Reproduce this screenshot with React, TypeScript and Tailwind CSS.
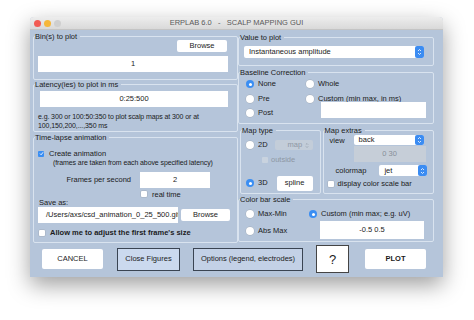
import React from "react";

const ink = "text-[#1b1b1b]";

function Panel({
  title,
  className,
  children,
}: {
  title: string;
  className?: string;
  children?: React.ReactNode;
}) {
  return (
    <fieldset className={`border border-[#d9e3ef] rounded-[2px] ${className ?? ""}`}>
      <legend className="px-0 ml-[1px] text-[7.5px] leading-[9px] pr-[3px]">{title}</legend>
      {children}
    </fieldset>
  );
}

function Radio({ on, label, dim }: { on?: boolean; label: string; dim?: boolean }) {
  return (
    <div className="flex items-center h-[8px]">
      <span
        className={`w-[8px] h-[8px] rounded-full flex items-center justify-center shrink-0 ${
          on ? "bg-[#3a8ef3]" : "bg-white shadow-[0_0_0_0.5px_#a3aebb]"
        }`}
      >
        {on && <span className="w-[3px] h-[3px] rounded-full bg-white" />}
      </span>
      <span className={`ml-[4px] text-[7.5px] leading-none ${dim ? "text-[#8b96a3]" : ""}`}>{label}</span>
    </div>
  );
}

function Check({ on, dim }: { on?: boolean; dim?: boolean }) {
  return (
    <span
      className={`w-[6px] h-[6px] rounded-[1px] flex items-center justify-center shrink-0 ${
        on ? "bg-[#3a8ef3]" : dim ? "bg-[#c9d3df]" : "bg-white shadow-[0_0_0_0.5px_#a3aebb]"
      }`}
    >
      {on && (
        <svg width="5" height="5" viewBox="0 0 10 10">
          <path d="M2 5.2 L4.2 7.5 L8.2 2.5" stroke="white" strokeWidth="1.8" fill="none" />
        </svg>
      )}
    </span>
  );
}

function Stepper() {
  return (
    <span className="w-[9px] h-full rounded-[2px] bg-[#3b8cf2] flex items-center justify-center shrink-0">
      <svg width="5" height="8" viewBox="0 0 10 16">
        <path d="M2 6 L5 3 L8 6 M2 10 L5 13 L8 10" stroke="white" strokeWidth="1.6" fill="none" />
      </svg>
    </span>
  );
}

function Select({ value, className }: { value: string; className: string }) {
  return (
    <div className={`bg-white flex items-center rounded-[2px] ${className}`}>
      <span className="flex-1 pl-[5px] text-[7.5px] leading-none">{value}</span>
      <Stepper />
    </div>
  );
}

export default function App() {
  return (
    <div className={`w-[474px] h-[320px] bg-white pl-[30px] pt-[17px] font-['Liberation_Sans',Arial,sans-serif] ${ink}`}>
      <div className="w-[413px] h-[260px] bg-[#b5c5da] rounded-t-[4px] shadow-[0_8px_22px_rgba(0,0,0,0.38)] flex flex-col overflow-hidden">
        {/* title bar */}
        <div className="h-[13px] bg-gradient-to-b from-[#ededed] to-[#d9d9d9] border-b border-[#c4c4c4] grid grid-cols-[1fr_auto_1fr] items-center">
          <div className="flex items-center gap-[3px] pl-[4px]">
            <span className="w-[7px] h-[7px] rounded-full bg-[#f25a52]" />
            <span className="w-[7px] h-[7px] rounded-full bg-[#f6b73a]" />
            <span className="w-[7px] h-[7px] rounded-full bg-[#cfcfcf]" />
          </div>
          <div className="text-[7.5px] leading-none text-[#5a5a5a] whitespace-pre">ERPLAB 6.0   -   SCALP MAPPING GUI</div>
          <div />
        </div>

        {/* body */}
        <div className="flex-1 pl-[3px] pt-[2px] flex flex-col">
          <div className="flex h-[211px]">
            {/* left column */}
            <div className="w-[205px] flex flex-col">
              <Panel title="Bin(s) to plot" className="h-[48px]">
                <div className="flex justify-end pr-[10px] -mt-[1px]">
                  <div className="w-[50px] h-[12px] bg-white rounded-[2px] flex items-center justify-center text-[7.5px] leading-none">
                    Browse
                  </div>
                </div>
                <div className="ml-[4px] mt-[4px] w-[190px] h-[16px] bg-white flex items-center justify-center text-[7.5px] leading-none">
                  1
                </div>
              </Panel>

              <Panel title="Latency(ies) to plot in ms" className="h-[52px]">
                <div className="ml-[6px] mt-[2px] w-[188px] h-[16px] bg-white flex items-center justify-center text-[7.5px] leading-none">
                  0:25:500
                </div>
                <div className="ml-[4px] mt-[5px] text-[7px] leading-[9px] tracking-[-0.1px]">
                  e.g. 300 or 100:50:350 to plot scalp maps at 300 or at
                  <br />
                  100,150,200,...,350 ms
                </div>
              </Panel>

              <Panel title="Time-lapse animation" className="mt-[1px] h-[110px]">
                <div className="flex items-center ml-[4px] mt-[8px]">
                  <Check on />
                  <span className="ml-[5px] text-[7.5px] leading-none">Create animation</span>
                </div>
                <div className="ml-[19px] mt-[1px] text-[7px] leading-none whitespace-nowrap tracking-[-0.1px]">
                  (frames are taken from each above specified latency)
                </div>
                <div className="flex items-center mt-[6px]">
                  <span className="w-[97px] text-right text-[7.5px] leading-none">Frames per second</span>
                  <div className="ml-[9px] w-[70px] h-[16px] bg-white flex items-center justify-center text-[7.5px] leading-none">
                    2
                  </div>
                </div>
                <div className="flex items-center ml-[107px] mt-[3px]">
                  <Check />
                  <span className="ml-[5px] text-[7.5px] leading-none">real time</span>
                </div>
                <div className="ml-[5px] text-[7.5px] leading-[9px]">Save as:</div>
                <div className="flex items-center">
                  <div className="ml-[4px] w-[140px] h-[16px] bg-white flex items-center pl-[8px] text-[7.5px] leading-none whitespace-nowrap overflow-hidden">
                    /Users/axs/csd_animation_0_25_500.gif
                  </div>
                  <div className="ml-[3px] w-[49px] h-[12px] bg-white rounded-[2px] flex items-center justify-center text-[7.5px] leading-none">
                    Browse
                  </div>
                </div>
                <div className="flex items-center ml-[5px] mt-[6px]">
                  <Check />
                  <span className="ml-[5px] text-[7.5px] leading-none font-bold whitespace-nowrap">Allow me to adjust the first frame's size</span>
                </div>
              </Panel>
            </div>

            {/* right column */}
            <div className="w-[196px] flex flex-col">
              <Panel title="Value to plot" className="mt-[1px] h-[33px]">
                <Select value="Instantaneous amplitude" className="ml-[5px] mt-[4px] w-[180px] h-[12px]" />
              </Panel>

              <Panel title="Baseline Correction" className="mt-[2px] h-[56px]">
                <div className="flex mt-[3px] ml-[7px]">
                  <div className="w-[60px] flex flex-col gap-[6.5px]">
                    <Radio on label="None" />
                    <Radio label="Pre" />
                    <Radio label="Post" />
                  </div>
                  <div className="flex flex-col">
                    <Radio label="Whole" />
                    <div className="mt-[6.5px]">
                      <Radio label="Custom (min max, in ms)" />
                    </div>
                    <div className="ml-[15px] -mt-[1px] w-[105px] h-[16px] bg-white" />
                  </div>
                </div>
              </Panel>

              <div className="flex mt-[2px] h-[68px]">
                <Panel title="Map type" className="w-[81px] ml-[2px] h-full">
                  <div className="flex items-center ml-[5px] mt-[5px]">
                    <Radio label="2D" />
                    <div className="ml-[7px] w-[38px] h-[10px] bg-[#c3cdd9] rounded-[2px] flex items-center justify-between pl-[13px] pr-[4px] text-[7.5px] leading-none text-[#8d97a4]">
                      <span>map</span>
                      <svg width="4" height="7" viewBox="0 0 10 16">
                        <path d="M2 6 L5 3 L8 6 M2 10 L5 13 L8 10" stroke="#8d97a4" strokeWidth="1.6" fill="none" />
                      </svg>
                    </div>
                  </div>
                  <div className="flex items-center ml-[21px] mt-[6px]">
                    <Check dim />
                    <span className="ml-[3px] text-[7.5px] leading-none text-[#8d97a4]">outside</span>
                  </div>
                  <div className="flex items-center ml-[5px] mt-[12px]">
                    <Radio on label="3D" />
                    <div className="ml-[9px] w-[36px] h-[15px] bg-white rounded-[2px] flex items-center justify-center text-[7.5px] leading-none">
                      spline
                    </div>
                  </div>
                </Panel>

                <Panel title="Map extras" className="w-[112px] ml-[2px] h-full">
                  <div className="flex items-start">
                    <span className="ml-[6px] mt-[2px] text-[7.5px] leading-none">view</span>
                    <div className="ml-[9px] flex flex-col">
                      <Select value="back" className="w-[70px] h-[10px]" />
                      <div className="mt-[1px] w-[72px] h-[16px] bg-[#c6ced8] flex items-center justify-center text-[7.5px] leading-none text-[#868f99]">
                        0 30
                      </div>
                    </div>
                  </div>
                  <div className="flex items-center mt-[3px]">
                    <span className="ml-[12px] text-[7.5px] leading-none">colormap</span>
                    <Select value="jet" className="ml-[13px] w-[48px] h-[11px]" />
                  </div>
                  <div className="flex items-center ml-[4px] mt-[4px]">
                    <Check />
                    <span className="ml-[4px] text-[7.5px] leading-none">display color scale bar</span>
                  </div>
                </Panel>
              </div>

              <Panel title="Color bar scale" className="mt-[1px] h-[47px]">
                <div className="flex ml-[7px] mt-[6px]">
                  <div className="w-[63px] flex flex-col gap-[9px]">
                    <Radio label="Max-Min" />
                    <Radio label="Abs Max" />
                  </div>
                  <div className="flex flex-col">
                    <Radio on label="Custom (min max; e.g. uV)" />
                    <div className="ml-[11px] mt-[3px] w-[104px] h-[18px] bg-white flex items-center justify-center text-[7.5px] leading-none">
                      -0.5 0.5
                    </div>
                  </div>
                </div>
              </Panel>
            </div>
          </div>

          {/* buttons */}
          <div className="flex items-center h-[28px] mt-[2px]">
            <div className="ml-[9px] w-[61px] h-[20px] bg-white rounded-[2px] flex items-center justify-center text-[7.5px] leading-none">
              CANCEL
            </div>
            <div className="ml-[14px] w-[63px] h-[23px] bg-[#cbd9ee] border border-[#3a4452] border-r-[1.5px] border-b-[1.5px] flex items-center justify-center text-[7.5px] leading-none">
              Close Figures
            </div>
            <div className="ml-[13px] w-[110px] h-[23px] bg-[#c3d1e6] border border-[#3a4452] border-r-[1.5px] border-b-[1.5px] flex items-center justify-center text-[7.5px] leading-none">
              Options (legend, electrodes)
            </div>
            <div className="ml-[13px] w-[33px] h-[28px] bg-white border border-[#444] border-r-[1.5px] border-b-[1.5px] flex items-center justify-center text-[13px] leading-none">
              ?
            </div>
            <div className="ml-[16px] w-[61px] h-[20px] bg-white rounded-[2px] flex items-center justify-center text-[7.5px] leading-none font-bold">
              PLOT
            </div>
          </div>
        </div>
      </div>
    </div>
  );
}
